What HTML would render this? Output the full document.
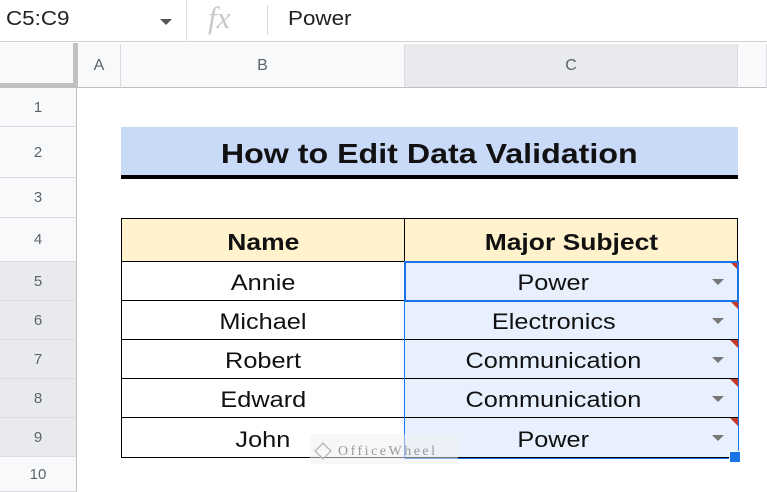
<!DOCTYPE html>
<html><head><style>
*{margin:0;padding:0;box-sizing:border-box}
body{width:767px;height:492px;overflow:hidden;background:#fff;font-family:"Liberation Sans",Arial,sans-serif;position:relative}
.a{position:absolute}
.rh{position:absolute;left:0;width:77px;background:#f8f9fa;border-bottom:1px solid #dadce0;border-right:1px solid #c0c0c0;color:#5f6368;font-size:15px;display:flex;align-items:center;justify-content:center}
.rh.s{background:#e8eaed}
.ch{position:absolute;top:44px;height:44px;background:#f8f9fa;border-right:1px solid #dadce0;border-bottom:1px solid #c0c0c0;color:#5f6368;font-size:16px;display:flex;align-items:center;justify-content:center}
.cell{position:absolute;display:flex;align-items:center;justify-content:center;font-size:22px;color:#111;padding-top:4px}
.cell span{display:inline-block;transform:scaleX(1.15)}
.c{padding-right:36px}
.dd{position:absolute;right:14px;width:0;height:0;border-left:6px solid transparent;border-right:6px solid transparent;border-top:6px solid #777}
.tri{position:absolute;right:0;top:0;width:0;height:0;border-left:8px solid transparent;border-top:8px solid #c53929}
.st{display:inline-block;transform:scaleX(1.12);transform-origin:left}
</style></head><body>
<div class="a" style="left:0;top:0;width:767px;height:42px;border-bottom:1px solid #d0d0d0"></div>
<div class="a" style="left:6px;top:8px;font-size:20px;color:#222"><span class="st">C5:C9</span></div>
<div class="a" style="left:160px;top:19px;border-left:6px solid transparent;border-right:6px solid transparent;border-top:6px solid #555"></div>
<div class="a" style="left:186px;top:0;width:1px;height:42px;background:#e0e0e0"></div>
<div class="a" style="left:208px;top:0px;font-size:31px;font-style:italic;color:#c8c8c8;font-family:'Liberation Serif',serif">fx</div>
<div class="a" style="left:267px;top:5px;width:1px;height:30px;background:#d8d8d8"></div>
<div class="a" style="left:288px;top:8px;font-size:20px;color:#222"><span class="st">Power</span></div>
<div class="a" style="left:0;top:43px;width:78px;height:45px;background:#f8f9fa;border-right:5px solid #c0c0c0;border-bottom:5px solid #c0c0c0"></div>
<div class="ch" style="left:78px;width:43px">A</div>
<div class="ch" style="left:121px;width:284px">B</div>
<div class="ch" style="left:405px;width:333px;background:#e8eaed">C</div>
<div class="ch" style="left:738px;width:29px"></div>
<div class="rh" style="top:88px;height:39px">1</div>
<div class="rh" style="top:127px;height:51px">2</div>
<div class="rh" style="top:178px;height:40px">3</div>
<div class="rh" style="top:218px;height:44px">4</div>
<div class="rh s" style="top:262px;height:39px">5</div>
<div class="rh s" style="top:301px;height:39px">6</div>
<div class="rh s" style="top:340px;height:39px">7</div>
<div class="rh s" style="top:379px;height:39px">8</div>
<div class="rh s" style="top:418px;height:39px">9</div>
<div class="rh" style="top:457px;height:35px">10</div>
<div class="cell" style="left:121px;top:127px;width:617px;height:49px;background:#c9daf8;font-weight:bold;font-size:28px"><span>How to Edit Data Validation</span></div>
<div class="a" style="left:121px;top:175px;width:617px;height:4px;background:#000"></div>
<div class="a" style="left:121px;top:218px;width:617px;height:240px;border:1px solid #000"></div>
<div class="cell" style="left:122px;top:219px;width:283px;height:43px;background:#fff2cc;font-weight:bold;font-size:23px;border-right:1px solid #000;border-bottom:1px solid #000"><span>Name</span></div>
<div class="cell" style="left:405px;top:219px;width:332px;height:43px;background:#fff2cc;font-weight:bold;font-size:23px;border-bottom:1px solid #000"><span>Major Subject</span></div>
<div class="cell" style="left:122px;top:262px;width:283px;height:39px;border-right:1px solid #000;border-bottom:1px solid #000"><span>Annie</span></div>
<div class="cell" style="left:122px;top:301px;width:283px;height:39px;border-right:1px solid #000;border-bottom:1px solid #000"><span>Michael</span></div>
<div class="cell" style="left:122px;top:340px;width:283px;height:39px;border-right:1px solid #000;border-bottom:1px solid #000"><span>Robert</span></div>
<div class="cell" style="left:122px;top:379px;width:283px;height:39px;border-right:1px solid #000;border-bottom:1px solid #000"><span>Edward</span></div>
<div class="cell" style="left:122px;top:418px;width:283px;height:39px;border-right:1px solid #000"><span>John</span></div>
<div class="cell c" style="left:405px;top:262px;width:333px;height:39px;background:#e8f0fe;border-bottom:1px solid #000"><span>Power</span><div class="dd" style="top:17px"></div><div class="tri"></div></div>
<div class="cell c" style="left:405px;top:301px;width:333px;height:39px;background:#e8f0fe;border-bottom:1px solid #000"><span>Electronics</span><div class="dd" style="top:17px"></div><div class="tri"></div></div>
<div class="cell c" style="left:405px;top:340px;width:333px;height:39px;background:#e8f0fe;border-bottom:1px solid #000"><span>Communication</span><div class="dd" style="top:17px"></div><div class="tri"></div></div>
<div class="cell c" style="left:405px;top:379px;width:333px;height:39px;background:#e8f0fe;border-bottom:1px solid #000"><span>Communication</span><div class="dd" style="top:17px"></div><div class="tri"></div></div>
<div class="cell c" style="left:405px;top:418px;width:333px;height:39px;background:#e8f0fe"><span>Power</span><div class="dd" style="top:17px"></div><div class="tri"></div></div>
<div class="a" style="left:404px;top:261px;width:335px;height:198px;border:1px solid #1a73e8"></div>
<div class="a" style="left:404px;top:261px;width:335px;height:41px;border:2px solid #1a73e8"></div>
<div class="a" style="left:729px;top:451px;width:12px;height:12px;background:#1a73e8;border:1px solid #fff"></div>
<div class="a" style="left:310px;top:434px;width:148px;height:30px;background:rgba(240,240,240,0.5)"></div>
<div class="a" style="left:338px;top:444px;font-size:14px;letter-spacing:2.5px;color:#999;font-family:'Liberation Serif',serif">OfficeWheel</div>
<div class="a" style="left:314px;top:442px;width:18px;height:18px;border:2px solid #bbb;transform:rotate(45deg) scale(.7)"></div>
</body></html>
